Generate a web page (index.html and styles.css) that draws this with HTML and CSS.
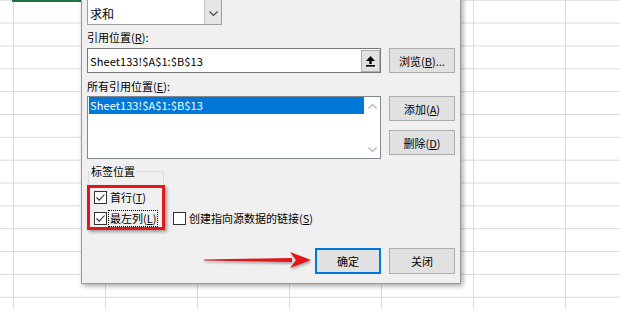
FILE: index.html
```html
<!DOCTYPE html>
<html lang="zh-CN">
<head>
<meta charset="utf-8">
<title>合并计算</title>
<link rel="stylesheet" href="styles.css">
</head>
<body>
<div class="dialog">
  <div class="combo">
    <span class="combo-text">求和</span>
    <span class="combo-btn"><svg width="9" height="6" viewBox="0 0 9 6"><polyline points="0.5,0.5 4.5,4.5 8.5,0.5" fill="none" stroke="#444" stroke-width="1.2"/></svg></span>
  </div>
  <div class="label">引用位置(<u>R</u>):</div>
  <div class="row">
    <div class="refbox">
      <span class="reftext">Sheet133!$A$1:$B$13</span>
      <span class="collapse-btn"><svg width="9" height="11" viewBox="0 0 9 11"><polygon points="0,5 4.5,0 9,5" fill="#000"/><rect x="3.3" y="4.5" width="2.4" height="3.5" fill="#000"/><rect x="0" y="9" width="9" height="1.6" fill="#000"/></svg></span>
    </div>
    <div class="btn">浏览(<u>B</u>)...</div>
  </div>
  <div class="label label-gap">所有引用位置(<u>E</u>):</div>
  <div class="row row-tight">
    <div class="listbox">
      <div class="items"><div class="item selected"><span class="reftext">Sheet133!$A$1:$B$13</span></div></div>
      <div class="scroll">
        <svg width="9" height="6" viewBox="0 0 9 6"><polyline points="0.5,5.5 4.5,1.5 8.5,5.5" fill="none" stroke="#b4b4b4" stroke-width="1.2"/></svg>
        <svg width="9" height="6" viewBox="0 0 9 6"><polyline points="0.5,0.5 4.5,4.5 8.5,0.5" fill="none" stroke="#b4b4b4" stroke-width="1.2"/></svg>
      </div>
    </div>
    <div class="side">
      <div class="btn">添加(<u>A</u>)</div>
      <div class="btn">删除(<u>D</u>)</div>
    </div>
  </div>
  <div class="options">
    <fieldset class="group">
      <legend>标签位置</legend>
      <div class="highlight">
        <div class="check"><span class="box"><svg width="11" height="11" viewBox="0 0 11 11"><polyline points="1.5,5.5 4.2,8.2 9.5,2.5" fill="none" stroke="#333" stroke-width="1.1"/></svg></span><span class="text">首行(<u>T</u>)</span></div>
        <div class="check"><span class="box"><svg width="11" height="11" viewBox="0 0 11 11"><polyline points="1.5,5.5 4.2,8.2 9.5,2.5" fill="none" stroke="#333" stroke-width="1.1"/></svg></span><span class="text focus">最左列(<u>L</u>)</span></div>
      </div>
    </fieldset>
    <div class="check link"><span class="box"></span><span class="text">创建指向源数据的链接(<u>S</u>)</span></div>
  </div>
  <div class="actions">
    <svg class="arrow" width="107" height="18" viewBox="0 0 107 18"><polygon points="0,8.6 88,7 88,11 0,9.4" fill="#e3141b"/><polygon points="86,1 107,9 86,17 92,9" fill="#e3141b"/></svg>
    <div class="btn primary">确定</div>
    <div class="btn">关闭</div>
  </div>
</div>
</body>
</html>
```
FILE: styles.css
```css
html, body {
  margin: 0;
  padding: 0;
}
body {
  width: 620px;
  height: 309px;
  overflow: hidden;
  position: relative;
  background-color: #fff;
  background-image:
    linear-gradient(#217346, #217346),
    linear-gradient(to right, #d9d9d9 1px, transparent 1px),
    linear-gradient(to bottom, #d9d9d9 1px, transparent 1px);
  background-size: 69px 2px, 92px 100%, 100% 22.85px;
  background-position: 12px 0, 13px 0, 0 22.6px;
  background-repeat: no-repeat, repeat, repeat;
  font-family: "Noto Sans CJK SC", "Noto Sans", sans-serif;
}
u { text-decoration: underline; text-underline-offset: 1px; }

.dialog {
  position: absolute;
  left: 81px;
  top: -4px;
  width: 368px;
  padding: 0 5px 9px;
  background: #f0f0f0;
  border: 1px solid #999;
  box-shadow: 2px 2px 5px rgba(0, 0, 0, 0.35);
  font-size: 11px;
  line-height: 16px;
  color: #000;
  white-space: nowrap;
}

.reftext {
  font-size: 11px;
  letter-spacing: 0.1px;
}

.combo {
  width: 135px;
  height: 28px;
  box-sizing: border-box;
  display: flex;
  border: 1px solid #a0a0a0;
  background: #fff;
}
.combo-text {
  padding: 5px 0 0 2px;
  display: flex;
  align-items: center;
  font-size: 12px;
}
.combo-btn {
  margin-left: auto;
  width: 16px;
  background: #e5e5e5;
  border-left: 1px solid #c4c4c4;
  display: flex;
  align-items: center;
  justify-content: center;
  padding-top: 5px;
}

.label {
  margin-top: 4px;
  height: 16px;
}
.label-gap { margin-top: 5px; }

.row {
  display: flex;
  gap: 8px;
  margin-top: 3px;
}
.row-tight { margin-top: 2px; }

.refbox {
  width: 294px;
  height: 25px;
  box-sizing: border-box;
  border: 1px solid #7a7a7a;
  background: #fff;
  display: flex;
  align-items: center;
  padding-left: 2px;
}
.collapse-btn {
  margin-left: auto;
  width: 19px;
  height: 22px;
  margin-top: 1px;
  box-sizing: border-box;
  background: #e1e1e1;
  border: 1px solid #adadad;
  display: flex;
  align-items: center;
  justify-content: center;
}

.btn {
  width: 66px;
  height: 25px;
  box-sizing: border-box;
  background: #e1e1e1;
  border: 1px solid #adadad;
  display: flex;
  align-items: center;
  justify-content: center;
  flex: none;
}
.primary {
  border: 2px solid #0078d7;
}

.listbox {
  width: 294px;
  height: 63px;
  box-sizing: border-box;
  border: 1px solid #828790;
  background: #fff;
  display: flex;
}
.items {
  flex: 1;
  padding: 0 0 0 1px;
}
.item {
  height: 17px;
  line-height: 17px;
  padding-left: 1px;
}
.selected {
  background: #0078d7;
  color: #fff;
}
.scroll {
  width: 16px;
  display: flex;
  flex-direction: column;
  justify-content: space-between;
  align-items: center;
  padding: 6px 0 5px;
}
.side {
  display: flex;
  flex-direction: column;
  gap: 9px;
}

.options {
  display: flex;
  align-items: flex-end;
  margin-top: 4px;
}
.group {
  margin: 0 0 0 1px;
  padding: 0;
  width: 76px;
  box-sizing: border-box;
  min-width: 0;
  border: 1px solid #dcdcdc;
  border-bottom: none;
}
.group legend {
  padding: 0 2px;
  margin-left: 0;
  line-height: 16px;
  height: 16px;
}
.highlight {
  margin: 6px -2px 0;
  height: 45px;
  box-sizing: border-box;
  border: 3px solid #e3161c;
  box-shadow: 2px 2px 3px rgba(0, 0, 0, 0.35);
  padding-left: 4px;
  display: flex;
  flex-direction: column;
  gap: 3px;
}
.check {
  display: flex;
  align-items: center;
  gap: 3px;
  height: 18px;
}
.text {
  display: inline-block;
  white-space: nowrap;
}
.box {
  width: 13px;
  height: 13px;
  box-sizing: border-box;
  border: 1px solid #333;
  background: #fff;
  display: flex;
  align-items: center;
  justify-content: center;
  flex: none;
}
.focus {
  margin-left: -2px;
  padding: 0 1px;
  border: 1px dotted #000;
  height: 17px;
  line-height: 15px;
  box-sizing: border-box;
}
.link {
  margin-left: 9px;
  margin-bottom: 3px;
}

.actions {
  display: flex;
  justify-content: flex-end;
  align-items: center;
  gap: 8px;
  margin-top: 18px;
}
.actions .btn { height: 26px; }
.arrow {
  margin-right: -4px;
  margin-bottom: 3px;
  filter: drop-shadow(1px 2px 1px rgba(0, 0, 0, 0.3));
}
```
